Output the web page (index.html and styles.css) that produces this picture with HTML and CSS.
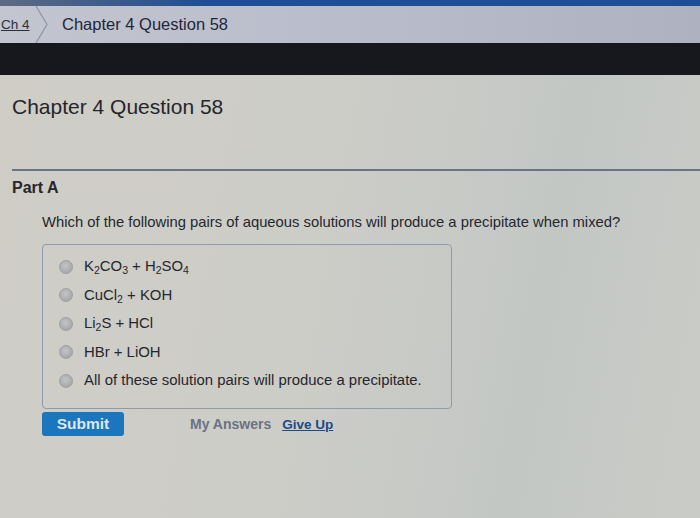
FILE: index.html
```html
<!DOCTYPE html>
<html>
<head>
<meta charset="utf-8">
<link rel="stylesheet" href="styles.css">
</head>
<body>
<div class="topstrip"></div>
<div class="crumbs">
  <a class="crumb-ch">Ch 4</a>
  <svg class="chev" width="14" height="37" viewBox="0 0 14 37"><polyline points="1,0 12,18.5 1,37" fill="none" stroke="#8d93a4" stroke-width="1.2"/></svg>
  <span class="crumb-title">Chapter 4 Question 58</span>
</div>
<div class="darkbar"></div>
<main class="page">
  <h1 class="title">Chapter 4 Question 58</h1>
  <hr class="rule">
  <h2 class="part">Part A</h2>
  <p class="question">Which of the following pairs of aqueous solutions will produce a precipitate when mixed?</p>
  <div class="options">
    <label class="opt"><span class="radio"></span><span>K<sub>2</sub>CO<sub>3</sub> + H<sub>2</sub>SO<sub>4</sub></span></label>
    <label class="opt"><span class="radio"></span><span>CuCl<sub>2</sub> + KOH</span></label>
    <label class="opt"><span class="radio"></span><span>Li<sub>2</sub>S + HCl</span></label>
    <label class="opt"><span class="radio"></span><span>HBr + LiOH</span></label>
    <label class="opt"><span class="radio"></span><span>All of these solution pairs will produce a precipitate.</span></label>
  </div>
  <div class="actions">
    <button class="submit">Submit</button>
    <span class="myans">My Answers</span>
    <a class="giveup">Give Up</a>
  </div>
</main>
</body>
</html>
```
FILE: styles.css
```css
html, body {
  margin: 0;
  padding: 0;
}
body {
  width: 700px;
  height: 518px;
  overflow: hidden;
  font-family: "Liberation Sans", Arial, sans-serif;
  color: #26272d;
  background: linear-gradient(100deg, #cfcdc6 0%, #cdcdc8 45%, #c3c7c4 75%, #c9cbc6 100%);
}
.topstrip {
  height: 6px;
  background: linear-gradient(90deg, #5e6a84 0%, #1d4e96 30%, #1d4f97 100%);
}
.crumbs {
  height: 37px;
  display: flex;
  align-items: center;
  background: linear-gradient(90deg, #c3c5cf 0%, #b9bccb 50%, #aeb2c0 100%);
}
.crumb-ch {
  font-size: 13.5px;
  color: #2c2f3b;
  text-decoration: underline;
  width: 34px;
  padding-left: 1px;
}
.chev {
  display: block;
}
.crumb-title {
  margin-left: 13px;
  font-size: 16.5px;
  color: #23263a;
}
.darkbar {
  height: 32px;
  background: #17181d;
}
.page {
  padding: 0 0 0 12px;
}
.title {
  margin: 20px 0 0;
  font-size: 21px;
  font-weight: normal;
  color: #25262c;
  line-height: 24px;
}
.rule {
  margin: 50px 0 0;
  border: 0;
  height: 2px;
  background: #6b7388;
}
.part {
  margin: 7px 0 0;
  font-size: 16px;
  font-weight: bold;
  line-height: 19px;
}
.question {
  margin: 16px 0 0 30px;
  font-size: 14.8px;
  line-height: 18px;
}
.options {
  margin: 13px 0 0 30px;
  width: 392px;
  height: 152px;
  border: 1.5px solid #8f9aaf;
  border-radius: 4px;
  padding: 11px 0 0 16px;
  display: flex;
  flex-direction: column;
  gap: 7.5px;
}
.opt {
  display: flex;
  align-items: center;
  gap: 11px;
  font-size: 14.9px;
  line-height: 21px;
  height: 21px;
}
.opt sub {
  font-size: 10.5px;
  vertical-align: -3px;
  line-height: 0;
}
.radio {
  width: 12px;
  height: 12px;
  border-radius: 50%;
  background: radial-gradient(circle at 45% 40%, #c4c4c6 0%, #a8a9ad 70%, #9b9ca1 100%);
  border: 1px solid #9fa0a5;
  flex: none;
}
.actions {
  margin: 3px 0 0 30px;
  display: flex;
  align-items: center;
  height: 24px;
}
.submit {
  width: 82px;
  height: 24px;
  background: #1b76be;
  border: 0;
  border-radius: 3px;
  color: #dfe6ee;
  font-family: "Liberation Sans", Arial, sans-serif;
  font-weight: bold;
  font-size: 15.5px;
  padding: 0;
}
.myans {
  margin-left: 66px;
  font-size: 14px;
  font-weight: bold;
  color: #6b7185;
}
.giveup {
  margin-left: 11px;
  font-size: 13.5px;
  font-weight: bold;
  color: #1c4a8a;
  text-decoration: underline;
}
```
